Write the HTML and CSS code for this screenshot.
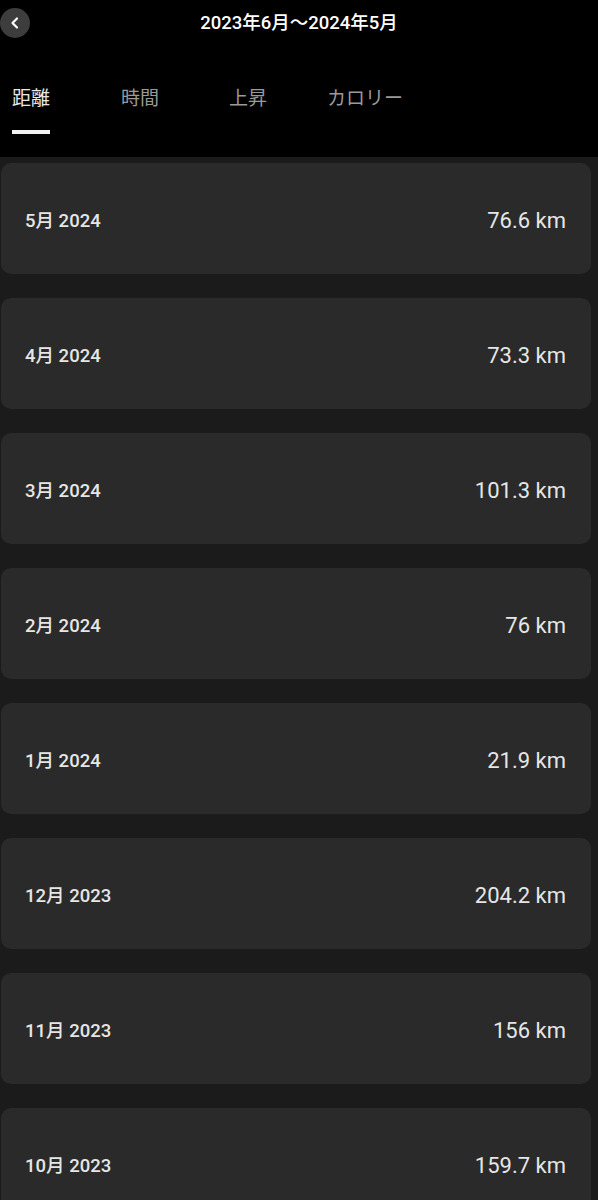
FILE: index.html
```html
<!DOCTYPE html>
<html lang="ja">

<head>
	<meta charset="utf-8">
	<title>距離</title>
	<link rel="stylesheet" href="styles.css">
</head>

<body>
	<header class="top">
		<div class="topbar">
			<button class="back" aria-label="戻る">
				<svg width="14" height="14" viewBox="0 0 14 14">
					<path d="M9 2.5 L4.5 7 L9 11.5" fill="none" stroke="#fff" stroke-width="2.2" stroke-linecap="round" stroke-linejoin="round"/>
				</svg>
			</button>
			<h1 class="title">2023年6月～2024年5月</h1>
			<span></span>
		</div>
		<nav class="tabs">
			<a class="tab active">距離</a>
			<a class="tab">時間</a>
			<a class="tab">上昇</a>
			<a class="tab">カロリー</a>
		</nav>
	</header>
	<main class="list">
		<div class="row"><span class="month">5月 2024</span><span class="value">76.6 km</span></div>
		<div class="row"><span class="month">4月 2024</span><span class="value">73.3 km</span></div>
		<div class="row"><span class="month">3月 2024</span><span class="value">101.3 km</span></div>
		<div class="row"><span class="month">2月 2024</span><span class="value">76 km</span></div>
		<div class="row"><span class="month">1月 2024</span><span class="value">21.9 km</span></div>
		<div class="row"><span class="month">12月 2023</span><span class="value">204.2 km</span></div>
		<div class="row"><span class="month">11月 2023</span><span class="value">156 km</span></div>
		<div class="row"><span class="month">10月 2023</span><span class="value">159.7 km</span></div>
	</main>
</body>

</html>
```

FILE: styles.css
```css
html, body {
	margin: 0;
	background: #1b1b1b;
}
body {
	font-family: Roboto, "Noto Sans CJK JP", sans-serif;
	color: #e6e6e6;
	height: 1200px;
	overflow: hidden;
}
.top {
	background: #000;
	height: 157px;
}
.topbar {
	display: grid;
	grid-template-columns: 30px 1fr 30px;
	align-items: center;
	padding-top: 8px;
	height: 30px;
}
.back {
	width: 30px;
	height: 30px;
	border-radius: 50%;
	border: none;
	padding: 0;
	background: #3d3d3d;
	display: flex;
	align-items: center;
	justify-content: center;
}
.title {
	margin: 0;
	text-align: center;
	font-size: 18.5px;
	font-weight: 500;
	color: #fff;
	line-height: 30px;
}
.tabs {
	display: grid;
	grid-template-columns: 109px 108px 98px auto;
	padding: 45px 0 0 12px;
}
.tab {
	font-size: 19px;
	line-height: 32px;
	color: #9a9a9a;
	justify-self: start;
}
.tab.active {
	color: #e8e8e8;
	border-bottom: 4px solid #f2f2f2;
	padding-bottom: 15px;
}
.list {
	padding: 6px 7px 0 1px;
	display: flex;
	flex-direction: column;
	gap: 24px;
}
.row {
	box-sizing: border-box;
	background: #2a2a2a;
	border-radius: 10px;
	height: 111px;
	display: flex;
	align-items: center;
	justify-content: space-between;
	padding: 4px 25px 0 24px;
	flex-shrink: 0;
}
.month {
	font-size: 18.5px;
	font-weight: 500;
	line-height: 24px;
}
.value {
	font-size: 22px;
	line-height: 24px;
}
```
